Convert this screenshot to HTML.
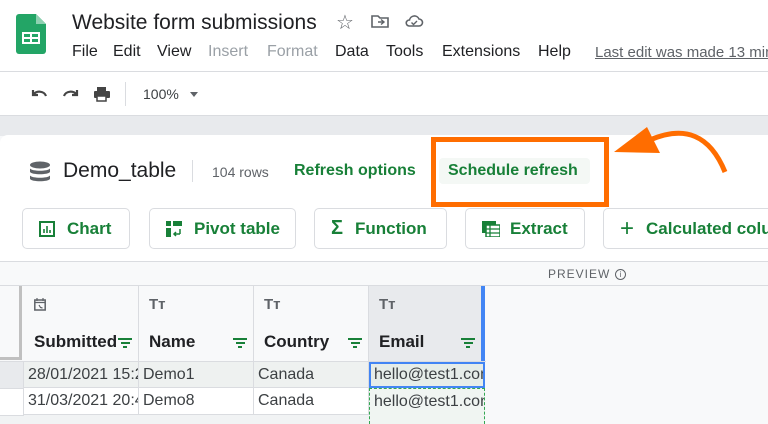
<!DOCTYPE html>
<html><head><style>
*{margin:0;padding:0;box-sizing:border-box}
html,body{width:768px;height:424px;overflow:hidden}
body{background:#f8f9fa;font-family:"Liberation Sans",Arial,sans-serif;position:relative}
.a{position:absolute;white-space:nowrap}
.m{position:absolute;top:43px;font-size:16px;color:#202124}
.btn{position:absolute;top:208px;height:41px;border:1px solid #dadce0;border-radius:5px;background:#fff;color:#188038;font-size:17px;font-weight:bold;display:flex;align-items:center;padding-left:16px;white-space:nowrap;overflow:hidden}
.hc{position:absolute;top:286px;height:76px;border-right:1px solid #dadce0;background:#f8f9fa}
.hc b{position:absolute;left:10px;top:46px;font-size:17px;color:#202124}
.tt{position:absolute;left:10px;top:10px;font-size:15px;font-weight:bold;color:#5f6368}
.flt{position:absolute;right:6px;top:52px;width:14px}
.flt i{display:block;height:1.5px;background:#188038;margin:0 auto 2.5px}
.cell{position:absolute;height:26px;font-size:16px;color:#3c4043;padding-left:4px;line-height:26px;overflow:hidden;white-space:nowrap;border-right:1px solid #dadce0;border-bottom:1px solid #dadce0}
</style></head><body>
<div class="a" style="left:0;top:0;width:768px;height:72px;background:#fff;border-bottom:1px solid #dadce0"></div>
<svg class="a" style="left:16px;top:14px" width="30" height="40" viewBox="0 0 30 40"><path d="M3 0h17l10 10v27a3 3 0 0 1-3 3H3a3 3 0 0 1-3-3V3a3 3 0 0 1 3-3z" fill="#23a566"/><path d="M20 0v10h10z" fill="#8ed1b1"/><rect x="6" y="18" width="18" height="12" fill="#fff"/><rect x="8" y="20" width="6" height="3" fill="#23a566"/><rect x="16" y="20" width="6" height="3" fill="#23a566"/><rect x="8" y="25" width="6" height="3" fill="#23a566"/><rect x="16" y="25" width="6" height="3" fill="#23a566"/></svg>
<div class="a" style="left:72px;top:11px;font-size:21px;color:#202124">Website form submissions</div>
<div class="a" style="left:336px;top:10px;font-size:20px;color:#5f6368">☆</div>
<svg class="a" style="left:371px;top:14px" width="18" height="14"><path d="M1 2h6l2 2h8v9H1z" fill="none" stroke="#5f6368" stroke-width="1.6"/><path d="M7 8h6M10 5.5l3 2.5-3 2.5" fill="none" stroke="#5f6368" stroke-width="1.4"/></svg>
<svg class="a" style="left:404px;top:14px" width="20" height="14"><path d="M5 12h10a3.5 3.5 0 0 0 0-7 5 5 0 0 0-9.5 1A3 3 0 0 0 5 12z" fill="none" stroke="#5f6368" stroke-width="1.6"/><path d="M7.5 8.5l2 2 3.5-3.5" fill="none" stroke="#5f6368" stroke-width="1.4"/></svg>
<span class="m" style="left:72px">File</span><span class="m" style="left:113px">Edit</span><span class="m" style="left:157px">View</span><span class="m" style="left:208px;color:#9aa0a6">Insert</span><span class="m" style="left:267px;color:#9aa0a6">Format</span><span class="m" style="left:335px">Data</span><span class="m" style="left:386px">Tools</span><span class="m" style="left:442px">Extensions</span><span class="m" style="left:538px">Help</span>
<div class="a" style="left:595px;top:44px;width:173px;height:20px;overflow:hidden"><span style="font-size:15px;color:#5f6368;text-decoration:underline">Last edit was made 13 minutes ago</span></div>
<div class="a" style="left:0;top:72px;width:768px;height:44px;background:#fff;border-bottom:1px solid #dadce0"></div>
<svg class="a" style="left:30px;top:86px" width="82" height="16"><path d="M3 4v5h5M3 9a7 6 0 0 1 13 1" fill="none" stroke="#444" stroke-width="2.2"/><path d="M47 4v5h-5M47 9a7 6 0 0 0-13 1" fill="none" stroke="#444" stroke-width="2.2"/><path d="M67 1h9v4h-9z" fill="#444"/><rect x="64" y="5" width="16" height="7" rx="1" fill="#444"/><rect x="67" y="10" width="9" height="5" fill="#fff" stroke="#444" stroke-width="1.5"/></svg>
<div class="a" style="left:125px;top:82px;width:1px;height:24px;background:#dadce0"></div>
<div class="a" style="left:143px;top:86px;font-size:14px;color:#3c4043">100%</div>
<div class="a" style="left:190px;top:92px;border:4px solid transparent;border-top:5px solid #5f6368"></div>
<div class="a" style="left:0;top:116px;width:768px;height:20px;background:#e8eaed"></div>
<div class="a" style="left:0;top:135px;width:768px;height:127px;background:#fff;border-radius:8px 0 0 0;border-bottom:1px solid #dadce0"></div>
<svg class="a" style="left:29px;top:161px" width="22" height="22"><ellipse cx="11" cy="4" rx="10" ry="3.5" fill="#5f6368"/><path d="M1 7.5c2 3 18 3 20 0v3.5c-2 3-18 3-20 0z M1 14.5c2 3 18 3 20 0v3.5c-2 3-18 3-20 0z" fill="#5f6368"/></svg>
<div class="a" style="left:63px;top:159px;font-size:21px;color:#202124">Demo_table</div>
<div class="a" style="left:192px;top:160px;width:1px;height:22px;background:#dadce0"></div>
<div class="a" style="left:212px;top:164px;font-size:14px;color:#5f6368">104 rows</div>
<div class="a" style="left:294px;top:162px;font-size:16px;color:#188038;font-weight:bold">Refresh options</div>
<div class="a" style="left:439px;top:158px;width:151px;height:26px;background:#f4f8f5;border-radius:4px"></div>
<div class="a" style="left:448px;top:162px;font-size:16px;color:#188038;font-weight:bold">Schedule refresh</div>
<div class="a" style="left:431px;top:137px;width:178px;height:70px;border:5px solid #ff6d00"></div>
<svg class="a" style="left:600px;top:120px" width="140" height="70"><path d="M125 52C110 15 85 5 50 20" fill="none" stroke="#ff6d00" stroke-width="5"/><path d="M14 32L47 7 60 33z" fill="#ff6d00"/></svg>
<div class="btn" style="left:22px;width:108px"><svg width="16" height="16" style="margin-right:12px"><rect x="1" y="1" width="14" height="14" fill="none" stroke="#188038" stroke-width="2"/><path d="M5 12V8M8 12V5M11 12V9" stroke="#188038" stroke-width="1.6"/></svg>Chart</div>
<div class="btn" style="left:149px;width:147px"><svg width="16" height="18" style="margin-right:12px"><rect x="0" y="1" width="5" height="5" fill="#188038"/><rect x="7" y="1" width="9" height="5" fill="#188038"/><rect x="0" y="8" width="5" height="9" fill="#188038"/><path d="M8 14h6M14 9v5M10 12l-2 2 2 2" fill="none" stroke="#188038" stroke-width="1.5"/></svg>Pivot table</div>
<div class="btn" style="left:314px;width:133px"><span style="font-size:20px;margin-right:12px">Σ</span>Function</div>
<div class="btn" style="left:465px;width:120px"><svg width="18" height="16" style="margin-right:10px"><rect x="0" y="0" width="14" height="12" fill="#188038"/><rect x="4" y="4" width="14" height="12" fill="#fff" stroke="#188038" stroke-width="1.5"/><path d="M4 8h14M4 12h14M8 4v12" stroke="#188038" stroke-width="1.3"/></svg>Extract</div>
<div class="btn" style="left:603px;width:165px;border-right:none;border-radius:5px 0 0 5px"><span style="font-size:24px;font-weight:normal;margin-right:12px">+</span>Calculated column</div>
<div class="a" style="left:548px;top:267px;font-size:12px;color:#5f6368;letter-spacing:1px">PREVIEW</div>
<div class="a" style="left:615px;top:269px;width:11px;height:11px;border:1.3px solid #5f6368;border-radius:50%;font-size:8px;line-height:9px;text-align:center;color:#5f6368">i</div>
<div class="a" style="left:0;top:285px;width:768px;height:1px;background:#dadce0"></div>
<div class="a" style="left:0;top:286px;width:22px;height:74px;background:#f8f9fa;border-right:3px solid #c0c0c0;border-bottom:3px solid #c0c0c0"></div>
<div class="hc" style="left:24px;width:115px"><svg class="a" style="left:10px;top:12px" width="12" height="13"><rect x="0.8" y="2" width="10.4" height="10" fill="none" stroke="#5f6368" stroke-width="1.5"/><path d="M1 4.5h10M3 0v3M9 0v3M5 7l1.5 2.5 2 .5" fill="none" stroke="#5f6368" stroke-width="1.2"/></svg><b>Submitted</b><div class="flt"><i style="width:14px"></i><i style="width:9px"></i><i style="width:4px"></i></div></div>
<div class="hc" style="left:139px;width:115px"><span class="tt">Tт</span><b>Name</b><div class="flt"><i style="width:14px"></i><i style="width:9px"></i><i style="width:4px"></i></div></div>
<div class="hc" style="left:254px;width:115px"><span class="tt">Tт</span><b>Country</b><div class="flt"><i style="width:14px"></i><i style="width:9px"></i><i style="width:4px"></i></div></div>
<div class="hc" style="left:369px;width:116px;background:#e8eaed;border-right:4px solid #4285f4"><span class="tt">Tт</span><b>Email</b><div class="flt"><i style="width:14px"></i><i style="width:9px"></i><i style="width:4px"></i></div></div>
<div class="a" style="left:0;top:361px;width:486px;height:1px;background:#dadce0"></div>
<div class="a" style="left:0;top:362px;width:24px;height:26px;background:#e8eaed;border-right:1px solid #dadce0"></div>
<div class="a" style="left:0;top:388px;width:24px;height:27px;background:#fff;border-right:1px solid #dadce0;border-top:1px solid #dadce0"></div>
<div class="a" style="left:0;top:415px;width:24px;height:9px;background:#f1f3f4;border-top:1px solid #dadce0"></div>
<div class="cell" style="left:24px;top:362px;width:115px;background:#eef1f0">28/01/2021 15:22</div>
<div class="cell" style="left:139px;top:362px;width:115px;background:#eef1f0">Demo1</div>
<div class="cell" style="left:254px;top:362px;width:115px;background:#eef1f0">Canada</div>
<div class="cell" style="left:369px;top:362px;width:116px;background:#e6ede9;border:2px solid #4285f4;padding-left:3px;line-height:22px">hello@test1.com</div>
<div class="cell" style="left:24px;top:388px;width:115px;height:27px;background:#fff">31/03/2021 20:45</div>
<div class="cell" style="left:139px;top:388px;width:115px;height:27px;background:#fff">Demo8</div>
<div class="cell" style="left:254px;top:388px;width:115px;height:27px;background:#fff">Canada</div>
<div class="cell" style="left:369px;top:388px;width:116px;height:36px;background:#f0f5f2;border:1px dashed #34a853;border-bottom:none;line-height:26px">hello@test1.com</div>
<div class="a" style="left:24px;top:415px;width:345px;height:9px;background:#f1f3f4"></div>
</body></html>
